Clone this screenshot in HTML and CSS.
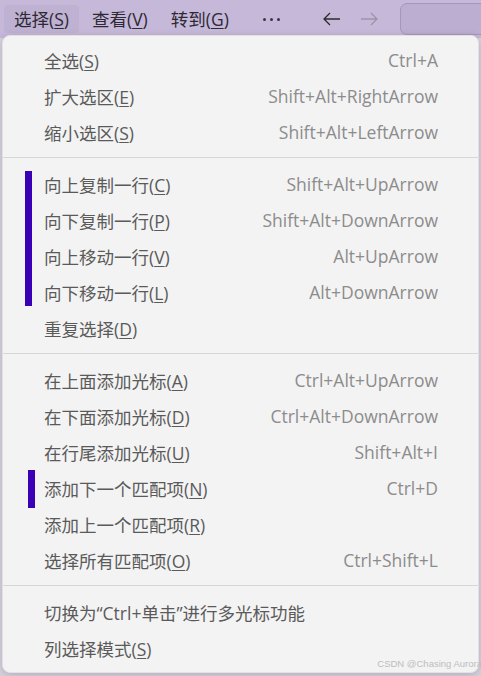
FILE: index.html
```html
<!DOCTYPE html>
<html lang="zh-CN">
<head>
<meta charset="utf-8">
<title>选择菜单</title>
<link rel="stylesheet" href="styles.css">
</head>
<body>
<div class="titlebar">
  <div class="menuitem active">选择(<u>S</u>)</div>
  <div class="menuitem">查看(<u>V</u>)</div>
  <div class="menuitem">转到(<u>G</u>)</div>
  <div class="more"><span></span><span></span><span></span></div>
  <div class="nav">
    <svg width="20" height="16" viewBox="0 0 20 16"><path d="M18 8H2M8 2L2 8l6 6" fill="none" stroke="#2b2b2b" stroke-width="1.3"/></svg>
    <svg width="20" height="16" viewBox="0 0 20 16"><path d="M2 8h16M12 2l6 6-6 6" fill="none" stroke="#9c93a8" stroke-width="1.3"/></svg>
  </div>
  <div class="search"></div>
</div>

<div class="dropdown">
  <div class="row"><span>全选(<u>S</u>)</span><span class="key">Ctrl+A</span></div>
  <div class="row"><span>扩大选区(<u>E</u>)</span><span class="key">Shift+Alt+RightArrow</span></div>
  <div class="row"><span>缩小选区(<u>S</u>)</span><span class="key">Shift+Alt+LeftArrow</span></div>
  <div class="sep"></div>
  <div class="row"><span>向上复制一行(<u>C</u>)</span><span class="key">Shift+Alt+UpArrow</span></div>
  <div class="row"><span>向下复制一行(<u>P</u>)</span><span class="key">Shift+Alt+DownArrow</span></div>
  <div class="row"><span>向上移动一行(<u>V</u>)</span><span class="key">Alt+UpArrow</span></div>
  <div class="row"><span>向下移动一行(<u>L</u>)</span><span class="key">Alt+DownArrow</span></div>
  <div class="row"><span>重复选择(<u>D</u>)</span><span class="key"></span></div>
  <div class="sep"></div>
  <div class="row"><span>在上面添加光标(<u>A</u>)</span><span class="key">Ctrl+Alt+UpArrow</span></div>
  <div class="row"><span>在下面添加光标(<u>D</u>)</span><span class="key">Ctrl+Alt+DownArrow</span></div>
  <div class="row"><span>在行尾添加光标(<u>U</u>)</span><span class="key">Shift+Alt+I</span></div>
  <div class="row"><span>添加下一个匹配项(<u>N</u>)</span><span class="key">Ctrl+D</span></div>
  <div class="row"><span>添加上一个匹配项(<u>R</u>)</span><span class="key"></span></div>
  <div class="row"><span>选择所有匹配项(<u>O</u>)</span><span class="key">Ctrl+Shift+L</span></div>
  <div class="sep"></div>
  <div class="row"><span>切换为“Ctrl+单击”进行多光标功能</span><span class="key"></span></div>
  <div class="row"><span>列选择模式(<u>S</u>)</span><span class="key"></span></div>

  <div class="mark mark-a"></div>
  <div class="mark mark-b"></div>
  <div class="watermark">CSDN @Chasing Aurora</div>
</div>
</body>
</html>
```

FILE: styles.css
```css
html, body {
  margin: 0;
  padding: 0;
}
body {
  width: 481px;
  height: 676px;
  overflow: hidden;
  position: relative;
  background: #d9d2e2;
  font-family: "Open Sans", "Noto Sans CJK SC", sans-serif;
  font-size: 17.5px;
}
u {
  text-decoration: underline;
  text-underline-offset: 2px;
  text-decoration-thickness: 1px;
}
.titlebar {
  height: 38px;
  background: #c6b8d9;
  display: flex;
  align-items: flex-start;
  padding: 5px 0 0 4px;
  box-sizing: border-box;
  color: #2e2a33;
  overflow: hidden;
}
.titlebar > * {
  flex-shrink: 0;
}
.menuitem {
  height: 28px;
  line-height: 28px;
  padding: 0 10px;
  border-radius: 4px;
  margin-right: 3px;
  white-space: nowrap;
}
.menuitem.active {
  background: #bfb1d2;
}
.more {
  display: flex;
  gap: 4px;
  height: 28px;
  align-items: center;
  margin-left: 21px;
}
.more span {
  width: 3px;
  height: 3px;
  border-radius: 50%;
  background: #3a3540;
}
.nav {
  display: flex;
  gap: 17px;
  height: 28px;
  align-items: center;
  margin-left: 42px;
}
.search {
  margin-left: 21px;
  width: 100px;
  height: 30px;
  margin-top: -2px;
  border: 1px solid #a597ba;
  border-radius: 7px;
  background: #bcaed0;
}
.dropdown {
  position: absolute;
  left: 2px;
  top: 35px;
  width: 477px;
  box-sizing: border-box;
  padding: 6px 0 6px;
  background: #f3f3f3;
  border: 1px solid #e2e2e2;
  border-radius: 8px;
  box-shadow: 0 2px 8px rgba(0, 0, 0, 0.18);
  color: #5a5a5a;
}
.row {
  height: 36px;
  display: flex;
  align-items: center;
  justify-content: space-between;
  padding: 0 40px 0 41px;
  white-space: nowrap;
}
.key {
  color: #8c8c8c;
}
.sep {
  height: 1px;
  background: #d7d7d7;
  margin: 7px 0 8px;
}
.mark {
  position: absolute;
  width: 7px;
  background: #3b00b6;
}
.mark-a {
  left: 22px;
  top: 135px;
  height: 135px;
}
.mark-b {
  left: 25px;
  top: 434px;
  height: 38px;
}
.watermark {
  position: absolute;
  right: -4px;
  bottom: 3px;
  font-family: "Liberation Sans", sans-serif;
  font-size: 9.5px;
  color: #bdbdbd;
}
```
